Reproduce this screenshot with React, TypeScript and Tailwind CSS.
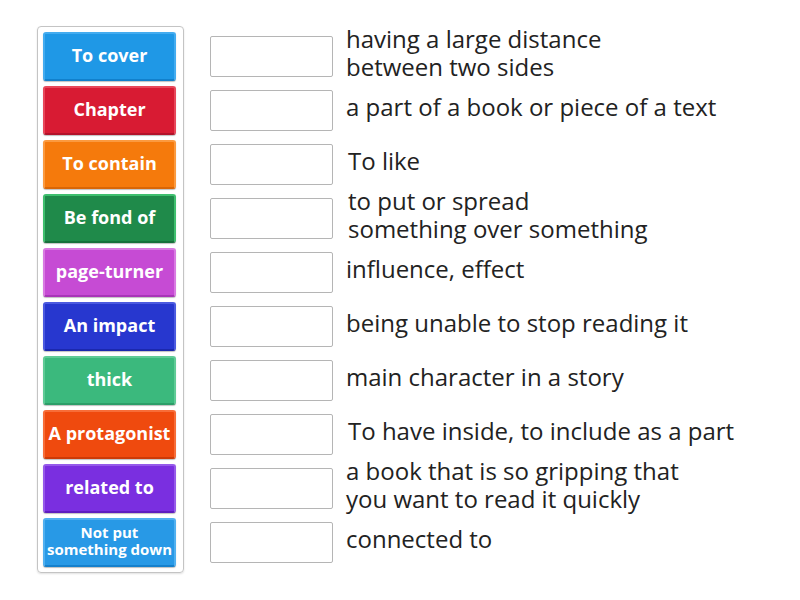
const tiles = [
  { label: 'To cover', cls: 'bg-[#1f98e6] border-[#43acf0] border-b-[#1180cc]' },
  { label: 'Chapter', cls: 'bg-[#d81b33] border-[#e8475a] border-b-[#b3122a]' },
  { label: 'To contain', cls: 'bg-[#f57a0c] border-[#fb9a3f] border-b-[#d96606]' },
  { label: 'Be fond of', cls: 'bg-[#1f8a4a] border-[#3fbf6e] border-b-[#17703b]' },
  { label: 'page-turner', cls: 'bg-[#c64bd4] border-[#d97ae2] border-b-[#a934b8]' },
  { label: 'An impact', cls: 'bg-[#2737cf] border-[#4b5ae0] border-b-[#1b28ad]' },
  { label: 'thick', cls: 'bg-[#3bb97d] border-[#5fcb96] border-b-[#2c9e68]' },
  { label: 'A protagonist', cls: 'bg-[#ef4a0e] border-[#f76d38] border-b-[#cc3a07]' },
  { label: 'related to', cls: 'bg-[#7a2fe0] border-[#965aea] border-b-[#5f1cc0]' },
  { label: 'Not put something down', cls: 'bg-[#2899e6] border-[#50b0f0] border-b-[#1580cc]', small: true },
];

// indent: a few definitions sit 2px further right in the original
const defs: { lines: string[]; indent?: boolean }[] = [
  { lines: ['having a large distance', 'between two sides'] },
  { lines: ['a part of a book or piece of a text'] },
  { lines: ['To like'], indent: true },
  { lines: ['to put or spread', 'something over something'], indent: true },
  { lines: ['influence, effect'] },
  { lines: ['being unable to stop reading it'] },
  { lines: ['main character in a story'] },
  { lines: ['To have inside, to include as a part'], indent: true },
  { lines: ['a book that is so gripping that', 'you want to read it quickly'] },
  { lines: ['connected to'] },
];

export default function App() {
  return (
    <div className="w-[800px] h-[600px] bg-white flex items-start pl-[37px] pt-[26px]" style={{ fontFamily: '"Open Sans", sans-serif' }}>
      <div className="w-[147px] border border-[#c4c4c4] rounded-[4px] p-[5px] flex flex-col gap-[5px] shadow-[0_1px_2px_rgba(0,0,0,0.12)]">
        {tiles.map((t) => (
          <div
            key={t.label}
            className={`h-[49px] w-[133px] rounded-[3px] border-2 flex items-center justify-center text-center text-white font-bold shadow-[0_1px_1px_rgba(0,0,0,0.25)] ${t.cls} ${t.small ? 'text-[15px] leading-[17px] pb-[4px]' : 'text-[18px] pb-[2px]'}`}
          >
            {t.label}
          </div>
        ))}
      </div>
      <div className="ml-[26px] pt-[6px] flex flex-col gap-[5px]">
        {defs.map((d, i) => (
          <div key={i} className="h-[49px] flex items-center">
            <div className="w-[123px] h-[41px] border border-[#b5b5b5] rounded-[2px] bg-white shrink-0" />
            <div className={`text-[24px] leading-[28px] text-[#222] whitespace-nowrap -mt-[7px] ${d.indent ? 'ml-[15px]' : 'ml-[13px]'}`}>
              {d.lines.map((line, j) => (
                <div key={j}>{line}</div>
              ))}
            </div>
          </div>
        ))}
      </div>
    </div>
  );
}
